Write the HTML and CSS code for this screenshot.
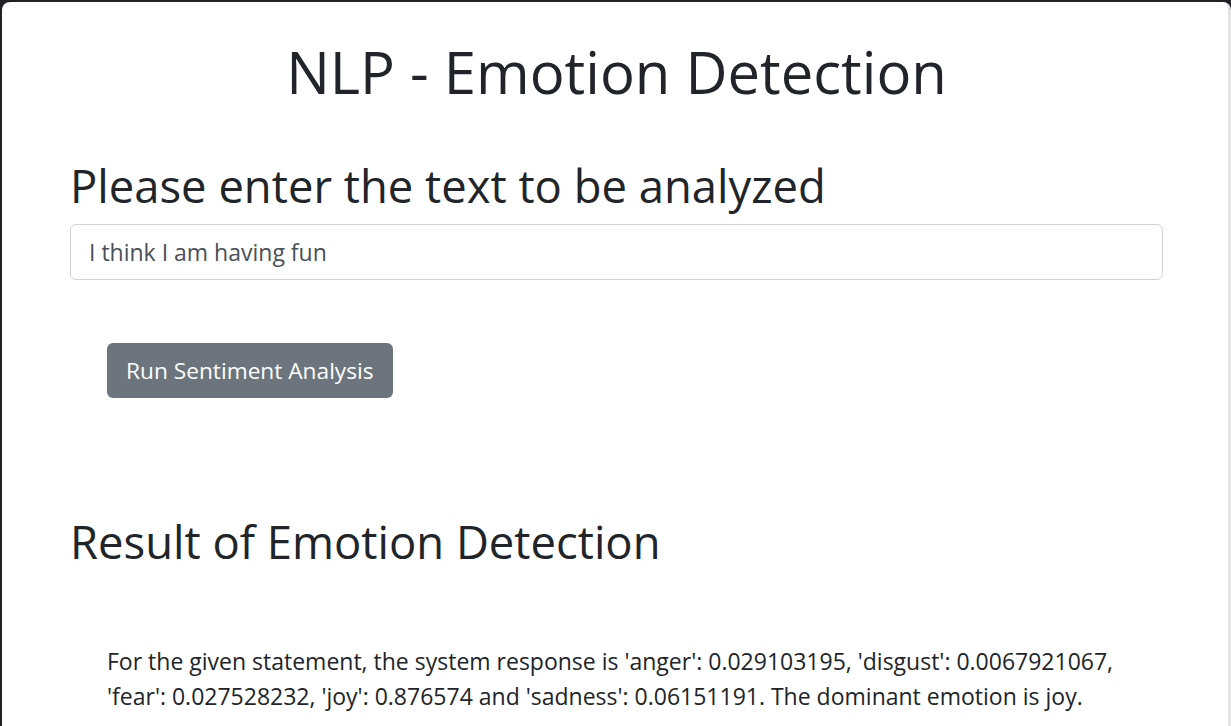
FILE: index.html
```html
<!DOCTYPE html>
<html lang="en">
<head>
  <meta charset="UTF-8">
  <title>NLP - Emotion Detection</title>
  <link rel="stylesheet" href="styles.css">
</head>
<body>

  <div class="janela">
    <div class="conteudo">
      <h1 class="titulo">NLP - Emotion Detection</h1>

      <h2 class="subtitulo">Please enter the text to be analyzed</h2>
      <input type="text" id="texto" class="campo" value="I think I am having fun">

      <button id="botao-analisar" class="botao">Run Sentiment Analysis</button>

      <h2 class="subtitulo resultado-titulo">Result of Emotion Detection</h2>

      <p id="resposta" class="resposta">For the given statement, the system response is 'anger': 0.029103195, 'disgust': 0.0067921067, 'fear': 0.027528232, 'joy': 0.876574 and 'sadness': 0.06151191. The dominant emotion is joy.</p>
    </div>
  </div>

</body>
</html>
```

FILE: styles.css
```css
html, body {
  margin: 0;
  height: 100%;
}

body {
  background-color: #202124;
  font-family: 'Open Sans', 'Noto Sans', sans-serif;
  color: #212529;
  overflow: hidden;
}

.janela {
  margin: 2px 0 0 2px;
  min-height: 100%;
  background-color: #fff;
  border-radius: 8px 8px 0 0;
  border-right: 3px solid #e3e3e3;
}

.conteudo {
  display: flex;
  flex-direction: column;
  align-items: flex-start;
  padding: 34px 65px 0 68px;
}

.titulo {
  align-self: stretch;
  margin: 0;
  text-align: center;
  font-size: 58px;
  font-weight: 400;
  line-height: 72px;
}

.subtitulo {
  margin: 48px 0 10px 0;
  font-size: 45.4px;
  font-weight: 400;
  line-height: 58px;
}

.campo {
  align-self: stretch;
  box-sizing: border-box;
  height: 56px;
  padding: 0 18px;
  border: 1px solid #ced4da;
  border-radius: 6px;
  font-family: inherit;
  font-size: 23px;
  color: #495057;
  outline: none;
}

.botao {
  margin: 63px 0 0 37px;
  height: 55px;
  padding: 0 19px;
  border: none;
  border-radius: 6px;
  background-color: #6c757d;
  color: white;
  font-family: inherit;
  font-size: 22.7px;
  cursor: pointer;
}

.resultado-titulo {
  margin-top: 114px;
  margin-bottom: 0;
}

.resposta {
  margin: 74px 0 0 37px;
  font-size: 23px;
  line-height: 35px;
}
```
